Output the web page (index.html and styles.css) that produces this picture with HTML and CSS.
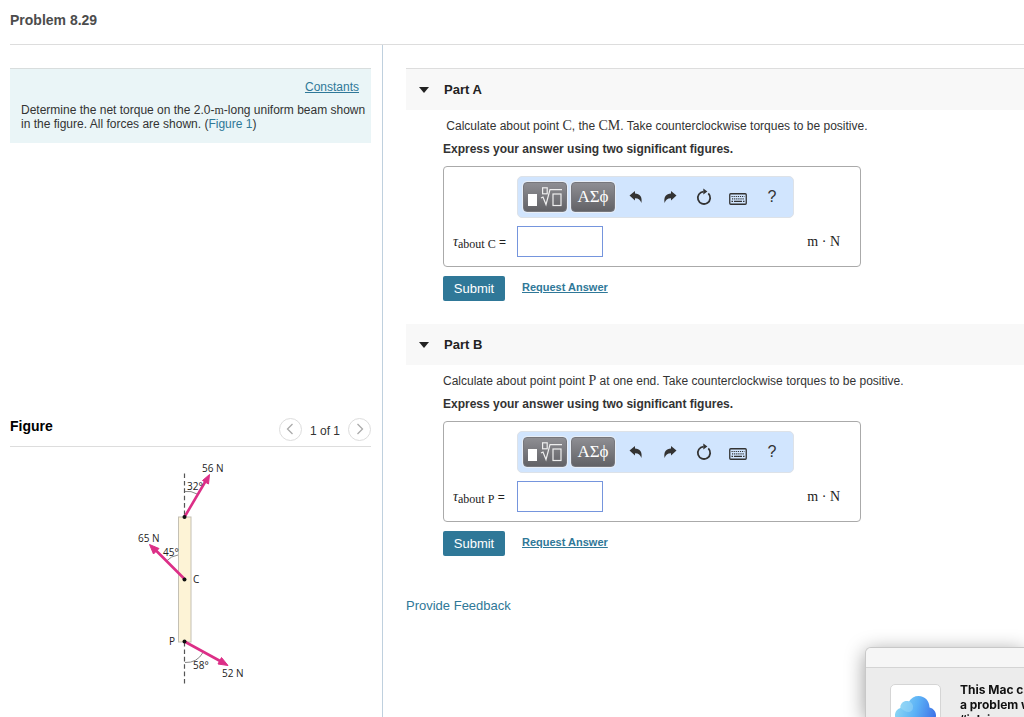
FILE: index.html
```html
<!DOCTYPE html>
<html lang="en">
<head>
<meta charset="utf-8">
<title>Problem 8.29</title>
<link rel="stylesheet" href="styles.css">
</head>
<body>
<svg class="sprite" aria-hidden="true">
  <symbol id="undo" viewBox="0 0 14 14"><path d="M0.5 5.5 L6 1 V3.6 C10.8 3.6 13.6 7 12.4 13 C11.4 9.800 9.6 8.200 6 8.200 V10.600 Z"/></symbol>
  <symbol id="redo" viewBox="0 0 14 14"><path d="M13.5 5.5 L8 1 V3.6 C3.2 3.6 0.4 7 1.6 13 C2.6 9.800 4.4 8.200 8 8.200 V10.600 Z"/></symbol>
  <symbol id="reset" viewBox="0 0 16 18"><path d="M12.300 5.300 A6.200 6.200 0 1 1 7.500 3.600" fill="none" stroke="currentColor" stroke-width="1.8"/><path d="M7.300 0.500 L11.400 3.500 L7.300 6.600 Z"/></symbol>
  <symbol id="keyboard" viewBox="0 0 18 12"><rect x="0.75" y="0.75" width="16.5" height="10.5" rx="1" fill="none" stroke="currentColor" stroke-width="1.3"/><path d="M2.5 3.5 H15.5 M3 5.8 H15.5" fill="none" stroke="currentColor" stroke-width="1.2" stroke-dasharray="1.2 0.9"/><path d="M2.5 8.4 H4 M5 8.4 H13 M14 8.4 H15.5" fill="none" stroke="currentColor" stroke-width="1.2"/></symbol>
  <symbol id="template" viewBox="0 0 34 20"><rect x="0" y="7" width="9" height="12" fill="#fff"/><g fill="none" stroke="#eee" stroke-width="1.2"><path d="M13 11 L15 10 L18 17.5 L22 2.6 H34"/><rect x="14.6" y="0.8" width="4.6" height="6"/><rect x="25" y="7" width="8" height="11.5"/></g></symbol>
</svg>

<header class="page-header"><h1>Problem 8.29</h1></header>

<main class="columns">
  <section class="problem">
    <div class="problem-top">
      <div class="statement">
        <a class="constants" href="#constants">Constants</a>
        <p>Determine the net torque on the 2.0-<span class="math">m</span>-long uniform beam shown in the figure. All forces are shown. (<a href="#figure">Figure 1</a>)</p>
      </div>
    </div>
    <div class="figure-bar" id="figure">
      <h2>Figure</h2>
      <div class="pager">
        <button type="button" aria-label="Previous figure"><svg width="8" height="12" viewBox="0 0 8 12"><path d="M6.5 1 L1.5 6 L6.5 11"/></svg></button>
        <span>1 of 1</span>
        <button type="button" aria-label="Next figure"><svg width="8" height="12" viewBox="0 0 8 12"><path d="M1.5 1 L6.5 6 L1.5 11"/></svg></button>
      </div>
    </div>
    <svg class="diagram" width="140" height="240" viewBox="120 455 140 240" role="img" aria-label="Beam with three forces">
      <rect x="178.5" y="517" width="12.5" height="125" fill="#fdf3d6" stroke="#c4c0b4"/>
      <g fill="none" stroke="#555" stroke-width="1.2">
        <path d="M184.5 473.5 V517 M184.5 642 V686" stroke-dasharray="4.6 2.8"/>
        <path d="M185 491.5 Q191 490.5 197 494 M166.5 561 Q171 556 178 555 M185 662.5 Q197 663 203 652.5" stroke="#888" stroke-width="1"/>
      </g>
      <g class="forces">
        <path d="M184.5 517 L206 480.5 M184.5 579 L155 549.5 M184.5 641.5 L221 661.5"/>
        <path class="tip" d="M209.5 474.5 L208.5 484 L202.5 480.5 Z M149.5 544.5 L159 548.5 L153.5 554 Z M228 665.5 L218 664 L221.5 657.5 Z"/>
      </g>
      <g fill="#111"><circle cx="184.5" cy="517" r="2"/><circle cx="184.5" cy="579.5" r="2"/><circle cx="184.5" cy="641.5" r="2"/></g>
      <g class="labels">
        <text x="202" y="472">56 N</text><text x="187" y="490">32°</text>
        <text x="138" y="542">65 N</text><text x="163" y="556">45°</text>
        <text x="193" y="583">C</text><text x="169" y="645">P</text>
        <text x="193" y="669">58°</text><text x="222" y="677">52 N</text>
      </g>
    </svg>
  </section>

  <section class="parts">
    <article class="part">
      <h2 class="part-title first"><span class="caret"></span>Part A</h2>
      <div class="part-body">
        <p>&nbsp;Calculate about point <span class="math">C</span>, the <span class="math">CM</span>. Take counterclockwise torques to be positive.</p>
        <p class="hint">Express your answer using two significant figures.</p>
        <form class="answer">
          <div class="toolbar">
            <button class="dark" type="button" aria-label="Templates"><svg width="34" height="20"><use href="#template"/></svg></button>
            <button class="dark" type="button">ΑΣϕ</button>
            <button class="tool" type="button" aria-label="Undo"><svg width="14" height="14"><use href="#undo"/></svg></button>
            <button class="tool" type="button" aria-label="Redo"><svg width="14" height="14"><use href="#redo"/></svg></button>
            <button class="tool" type="button" aria-label="Reset"><svg width="16" height="18"><use href="#reset"/></svg></button>
            <button class="tool" type="button" aria-label="Keyboard"><svg class="keys" width="18" height="12"><use href="#keyboard"/></svg></button>
            <button class="tool" type="button">?</button>
          </div>
          <label for="tau-c"><span class="math"><i>τ</i><sub>about C</sub></span> =</label>
          <input id="tau-c" type="text">
          <span class="math unit">m · N</span>
        </form>
        <div class="actions"><button class="submit" type="button">Submit</button><a href="#request-a">Request Answer</a></div>
      </div>
    </article>

    <article class="part">
      <h2 class="part-title"><span class="caret"></span>Part B</h2>
      <div class="part-body">
        <p>Calculate about point point <span class="math">P</span> at one end. Take counterclockwise torques to be positive.</p>
        <p class="hint">Express your answer using two significant figures.</p>
        <form class="answer">
          <div class="toolbar">
            <button class="dark" type="button" aria-label="Templates"><svg width="34" height="20"><use href="#template"/></svg></button>
            <button class="dark" type="button">ΑΣϕ</button>
            <button class="tool" type="button" aria-label="Undo"><svg width="14" height="14"><use href="#undo"/></svg></button>
            <button class="tool" type="button" aria-label="Redo"><svg width="14" height="14"><use href="#redo"/></svg></button>
            <button class="tool" type="button" aria-label="Reset"><svg width="16" height="18"><use href="#reset"/></svg></button>
            <button class="tool" type="button" aria-label="Keyboard"><svg class="keys" width="18" height="12"><use href="#keyboard"/></svg></button>
            <button class="tool" type="button">?</button>
          </div>
          <label for="tau-p"><span class="math"><i>τ</i><sub>about P</sub></span> =</label>
          <input id="tau-p" type="text">
          <span class="math unit">m · N</span>
        </form>
        <div class="actions"><button class="submit" type="button">Submit</button><a href="#request-b">Request Answer</a></div>
      </div>
    </article>
    <a class="feedback" href="#feedback">Provide Feedback</a>
  </section>
</main>

<aside class="notice">
  <div class="notice-bar"></div>
  <div class="notice-body">
    <div class="cloud-tile">
      <svg width="42" height="30" viewBox="0 0 42 30" aria-hidden="true">
        <defs><linearGradient id="cloud" x1="0" y1="0.4" x2="1" y2="0.6"><stop offset="0" stop-color="#8fd8f4"/><stop offset="0.5" stop-color="#5cb2f6"/><stop offset="1" stop-color="#3f74e8"/></linearGradient></defs>
        <path fill="url(#cloud)" d="M9 28 C3 28 0 24 0 19.500 C0 16 2 13 5.500 12 C5 8 8 5 12 5 C13 5 13.500 5.300 14 5.500 C16 2 19.500 0 23.500 0 C30 0 34.500 5 34.500 11.500 C38.500 12.500 41 15.500 41 19.500 C41 24.500 37 28 32 28 Z"/>
        <path fill="#a9e2f8" opacity="0.4" d="M5.500 12 C5 8 8 5 12 5 C15 5 17.500 7 18 10 C18.500 16 13 19 5.500 12 Z"/>
      </svg>
    </div>
    <div class="notice-text">This Mac can’t connect<br>a problem with<br>“jclaire</div>
  </div>
</aside>
</body>
</html>
```
FILE: styles.css
```css
* { box-sizing: border-box; }
body {
  margin: 0;
  min-height: 100vh;
  display: flex;
  flex-direction: column;
  background: #fff;
  color: #333;
  font: 12px/14px "Liberation Sans", Arial, sans-serif;
}
h1, h2, p { margin: 0; }
a { color: #2f7898; text-decoration: none; }
button { font-family: inherit; padding: 0; border: 0; cursor: pointer; }
.sprite { position: absolute; width: 0; height: 0; }
.math { font-family: "Liberation Serif", "Times New Roman", serif; font-size: 14px; line-height: 14px; }

.page-header { margin-left: 10px; height: 45px; padding-top: 11px; border-bottom: 1px solid #ddd; }
.page-header h1 { font-size: 14px; line-height: 18px; color: #4c4c4c; }

.columns { flex: 1; display: grid; grid-template-columns: 383px minmax(0, 1fr); }
.problem { padding: 23px 11px 0 10px; border-right: 1px solid #bfd0de; }
.problem-top { min-height: 344px; }
.statement { padding: 11px 0 12px 11px; background: #eaf5f7; border-top: 1px solid #d8dddd; }
.statement .math { font-size: 12px; line-height: 12px; }
.constants { display: block; width: fit-content; margin: 0 12px 9px auto; text-decoration: underline; }

.figure-bar { display: flex; justify-content: space-between; height: 35px; padding-top: 5px; border-bottom: 1px solid #ddd; }
.figure-bar h2 { font-size: 14px; line-height: 18px; color: #000; }
.pager { display: flex; align-items: center; gap: 8px; height: 24px; }
.pager span { padding-top: 3px; }
.pager button { display: grid; place-items: center; width: 23px; height: 23px; border: 1px solid #ddd; border-radius: 50%; background: #fff; }
.pager path { fill: none; stroke: #aaa; stroke-width: 1.3; }

.diagram { display: block; margin: 8px 0 0 110px; }
.forces { fill: none; stroke: #dc2f87; stroke-width: 2.6; }
.forces .tip { fill: #dc2f87; stroke-width: 1; }
.labels { font: 10px "Open Sans", "Noto Sans", sans-serif; fill: #222; }

.parts { padding: 23px 0 0 23px; }
.part { margin-bottom: 23px; }
.part-title { display: flex; align-items: center; gap: 15px; height: 41px; padding-left: 13px; background: #f8f8f8; font-size: 13px; color: #222; }
.part-title.first { height: 42px; border-top: 1px solid #ddd; }
.caret { border: 5px solid transparent; border-top: 6px solid #222; border-bottom: 0; }
.part-body { padding: 8px 24px 0 37px; }
.part-body p { line-height: 16px; }
.part-body .hint { margin-top: 7px; font-weight: bold; }

.answer {
  display: grid;
  grid-template-columns: 64px 86px 1fr;
  gap: 8px 0;
  align-items: center;
  max-width: 418px;
  margin-top: 9px;
  padding: 9px 20px 9px 9px;
  border: 1px solid #aaa;
  border-radius: 4px;
}
.answer label { white-space: nowrap; font-size: 12px; color: #222; }
.answer sub { font-size: 12px; line-height: 0; vertical-align: -2px; }
.answer input { width: 86px; height: 31px; border: 1px solid #7595dd; outline: 0; font-size: 13px; }
.unit { justify-self: end; color: #222; }
.toolbar {
  grid-column: 2 / -1;
  justify-self: start;
  display: flex;
  align-items: center;
  width: 277px;
  height: 42px;
  padding-left: 5px;
  border: 1px solid #dde2e8;
  border-radius: 5px;
  background: #d1e5fe;
}
.dark {
  display: grid;
  place-items: center;
  width: 44px;
  height: 30px;
  margin-right: 4px;
  border: 1px solid #77777c;
  border-radius: 4px;
  background: linear-gradient(#8e8e93, #626266);
  box-shadow: 0 0 0 1px #e8eef6;
  color: #fff;
  font: 17px/20px "Liberation Serif", serif;
}
.tool { display: grid; place-items: center; width: 34px; height: 30px; background: none; color: #333; fill: #333; font-size: 16px; }
.tool .keys { margin-top: 3px; }

.actions { display: flex; align-items: center; gap: 17px; margin-top: 9px; }
.submit { width: 62px; height: 25px; border-radius: 2px; background: #2f7898; color: #fff; font-size: 13px; }
.actions a { padding-bottom: 3px; font-size: 11px; font-weight: bold; text-decoration: underline; }
.feedback { display: inline-block; margin-top: 20px; font-size: 13px; }

.notice {
  position: fixed;
  right: 0;
  bottom: 0;
  width: 159px;
  height: 70px;
  overflow: hidden;
  border: 1px solid #c8c8c8;
  border-width: 1px 0 0 1px;
  border-radius: 6px 0 0 0;
  background: #ececec;
  box-shadow: 0 4px 20px rgba(0, 0, 0, 0.4);
}
.notice-bar { height: 20px; background: #f6f6f6; border-bottom: 1px solid #d4d4d4; }
.notice-body { display: flex; gap: 19px; padding: 14px 0 0 24px; }
.cloud-tile { flex: none; display: grid; justify-items: center; width: 51px; height: 51px; margin-top: 2px; padding-top: 11px; border: 1px solid #d5d5d5; border-radius: 5px; background: #fff; }
.notice-text { white-space: nowrap; font: bold 12px/15px Inter, sans-serif; color: #111; }
```
